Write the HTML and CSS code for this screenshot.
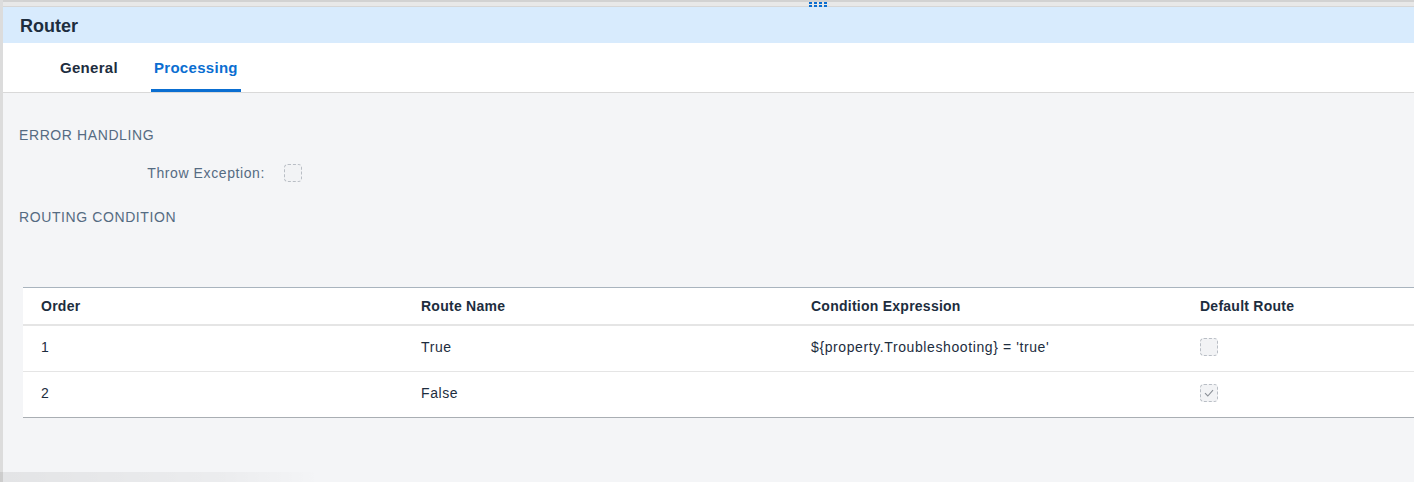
FILE: index.html
```html
<!DOCTYPE html>
<html>
<head>
<meta charset="utf-8">
<link rel="stylesheet" href="styles.css">
</head>
<body>
<div class="app">
  <div class="edge"></div>
  <div class="main">
    <div class="topbar">
      <div class="grip">
        <span></span><span></span><span></span><span></span>
        <span></span><span></span><span></span><span></span>
      </div>
    </div>
    <div class="header">Router</div>
    <div class="tabs">
      <div class="tab">General</div>
      <div class="tab active">Processing</div>
    </div>
    <div class="content">
      <div class="section-title first">ERROR HANDLING</div>
      <div class="form-row">
        <label class="form-label">Throw Exception:</label>
        <span class="checkbox"></span>
      </div>
      <div class="section-title second">ROUTING CONDITION</div>
      <table class="grid">
        <thead>
          <tr>
            <th class="c1">Order</th>
            <th class="c2">Route Name</th>
            <th class="c3">Condition Expression</th>
            <th class="c4">Default Route</th>
          </tr>
        </thead>
        <tbody>
          <tr>
            <td>1</td>
            <td>True</td>
            <td>${property.Troubleshooting} = 'true'</td>
            <td><span class="checkbox"></span></td>
          </tr>
          <tr>
            <td>2</td>
            <td>False</td>
            <td></td>
            <td><span class="checkbox checked"><svg viewBox="0 0 18 18" width="18" height="18"><path d="M5 9.2 L7.8 12 L13 6.2" fill="none" stroke="#8a8f96" stroke-width="1.1"/></svg></span></td>
          </tr>
        </tbody>
      </table>
    </div>
  </div>
  <div class="bottom-shadow"></div>
</div>
</body>
</html>
```

FILE: styles.css
```css
html, body {
  margin: 0;
  padding: 0;
  height: 100%;
  overflow: hidden;
}
body {
  background: #f4f5f7;
  font-family: "Liberation Sans", Arial, sans-serif;
  color: #1d2d3e;
}
.app {
  display: flex;
  height: 482px;
  position: relative;
}
.edge {
  width: 3px;
  flex: none;
  background: #dcdcdc;
}
.main {
  flex: 1;
  display: flex;
  flex-direction: column;
  min-width: 0;
}
.topbar {
  height: 7px;
  flex: none;
  position: relative;
  background: linear-gradient(#d2d2d2 0, #d2d2d2 2px, #e8e8e8 2px, #e8e8e8 6px, #d6d6d6 6px);
}
.grip {
  position: absolute;
  left: 806px;
  top: 2px;
  display: grid;
  grid-template-columns: repeat(4, 3px);
  gap: 1px 2px;
}
.grip span {
  width: 3px;
  height: 2px;
  background: #0a6ed1;
}
.header {
  height: 36px;
  flex: none;
  box-sizing: border-box;
  padding-top: 2px;
  background: #d8ebfd;
  padding-left: 17px;
  display: flex;
  align-items: center;
  font-weight: bold;
  font-size: 18px;
  color: #1d2d3e;
}
.tabs {
  height: 49px;
  flex: none;
  background: #fff;
  border-bottom: 1px solid #d9d9d9;
  display: flex;
  padding-left: 54px;
  gap: 30px;
}
.tab {
  padding: 3px 3px 0;
  display: flex;
  align-items: center;
  font-size: 15px;
  font-weight: bold;
  letter-spacing: 0.3px;
  color: #1d2d3e;
  height: 49px;
  box-sizing: border-box;
  border-bottom: 3px solid transparent;
}
.tab.active {
  color: #0a6ed1;
  border-bottom-color: #0a6ed1;
  border-radius: 3px 3px 0 0;
}
.content {
  flex: 1;
}
.section-title {
  font-size: 14px;
  line-height: 18px;
  letter-spacing: 0.6px;
  color: #556b82;
  padding-left: 16px;
}
.section-title.first {
  margin-top: 33px;
}
.section-title.second {
  margin-top: 26px;
}
.form-row {
  display: flex;
  align-items: center;
  margin-top: 20px;
  height: 18px;
}
.form-label {
  width: 281px;
  text-align: right;
  font-size: 14px;
  letter-spacing: 0.6px;
  color: #556b82;
  padding-right: 19px;
  box-sizing: border-box;
}
.checkbox {
  display: inline-block;
  width: 18px;
  height: 18px;
  box-sizing: border-box;
  border: 1px dashed #b9bec5;
  border-radius: 4px;
  background: #f2f3f5;
  position: relative;
  vertical-align: middle;
}
.checkbox svg {
  position: absolute;
  left: -1px;
  top: -1px;
}
.grid {
  margin-top: 61px;
  margin-left: 20px;
  width: calc(100% - 20px);
  border-collapse: collapse;
  background: #fff;
  table-layout: fixed;
  border-top: 1px solid #a9b4be;
  border-bottom: 1px solid #a9aeb3;
  font-size: 14px;
}
.grid th {
  height: 36px;
  text-align: left;
  font-weight: bold;
  padding: 0 0 0 18px;
  color: #1d2d3e;
  border-bottom: 2px solid #e5e5e5;
  letter-spacing: 0.25px;
}
.grid td {
  height: 41px;
  padding: 0 0 4px 18px;
  color: #1d2d3e;
  letter-spacing: 0.6px;
  border-bottom: 1px solid #e5e5e5;
}
.grid tbody tr:last-child td {
  border-bottom: 1px solid #a9aeb3;
}
.grid .c1 { width: 362px; }
.grid .c2 { width: 372px; }
.grid .c3 { width: 371px; }
.bottom-shadow {
  position: absolute;
  left: 0;
  bottom: 0;
  width: 320px;
  height: 10px;
  background: linear-gradient(to right, rgba(0,0,0,0.07), rgba(0,0,0,0.035) 70%, rgba(0,0,0,0));
  pointer-events: none;
}
```
